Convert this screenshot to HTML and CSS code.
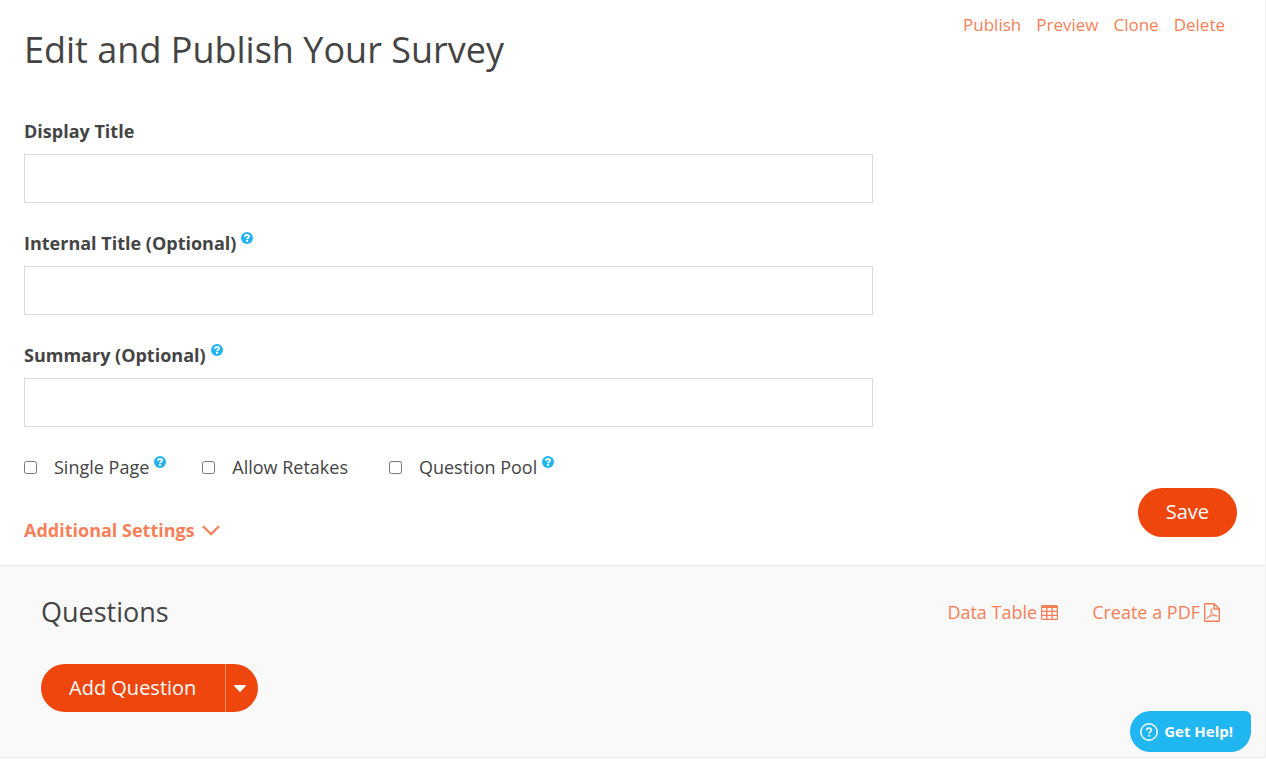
FILE: index.html
```html
<!DOCTYPE html>
<html lang="en">
<head>
<meta charset="utf-8">
<title>Edit and Publish Your Survey</title>
<link rel="stylesheet" href="styles.css">
</head>
<body>
<svg class="sprite" aria-hidden="true">
  <symbol id="help" viewBox="0 0 12 12">
    <circle cx="6" cy="6" r="6" fill="#23b4f2"/>
    <path d="M4 4.700C4 2.300 8 2.400 8 4.500C8 5.800 6.100 5.700 6.100 7.200" fill="none" stroke="#fff" stroke-width="1.900"/>
    <path d="M5.100 8h2v1.800h-2z" fill="#fff"/>
  </symbol>
</svg>
<main class="page">
  <section class="settings">
    <header class="top">
      <h1 class="title">Edit and Publish Your Survey</h1>
      <nav class="actions">
        <a href="#">Publish</a>
        <a href="#">Preview</a>
        <a href="#">Clone</a>
        <a href="#">Delete</a>
      </nav>
    </header>
    <form class="form">
      <div class="fields">
        <div class="field">
          <div class="caption"><label for="display">Display Title</label></div>
          <input class="text" type="text" id="display">
        </div>
        <div class="field">
          <div class="caption"><label for="internal">Internal Title (Optional)</label><svg class="help"><use href="#help"/></svg></div>
          <input class="text" type="text" id="internal">
        </div>
        <div class="field">
          <div class="caption"><label for="summary">Summary (Optional)</label><svg class="help"><use href="#help"/></svg></div>
          <input class="text" type="text" id="summary">
        </div>
        <div class="options">
          <div class="option"><input type="checkbox" id="single"><label for="single">Single Page</label><svg class="help"><use href="#help"/></svg></div>
          <div class="option"><input type="checkbox" id="retakes"><label for="retakes">Allow Retakes</label></div>
          <div class="option"><input type="checkbox" id="pool"><label for="pool">Question Pool</label><svg class="help"><use href="#help"/></svg></div>
        </div>
        <a class="more" href="#">Additional Settings
          <svg class="chevron" viewBox="0 0 18 11"><path d="M1 1.200l8 8 8-8" fill="none" stroke="currentColor" stroke-width="2.300"/></svg>
        </a>
      </div>
      <button class="save" type="submit">Save</button>
    </form>
  </section>
  <section class="questions">
    <header class="bar">
      <h2 class="subtitle">Questions</h2>
      <nav class="tools">
        <a href="#">Data Table
          <svg class="table-icon" viewBox="0 0 17 15"><rect width="17" height="15" rx="1.500" fill="currentColor"/><path d="M1.200 3h4v2.800h-4zM6.500 3h4v2.800h-4zM11.800 3h4v2.800h-4zM1.200 7h4v2.800h-4zM6.500 7h4v2.800h-4zM11.800 7h4v2.800h-4zM1.200 11h4v2.800h-4zM6.500 11h4v2.800h-4zM11.800 11h4v2.800h-4z" fill="#f9f9f9"/></svg>
        </a>
        <a href="#">Create a PDF
          <svg class="pdf-icon" viewBox="0 0 16 19"><g fill="none" stroke="currentColor"><path d="M1.300.7h8.800l5.200 5.200v11.700q0 .7-.7.7H1.300q-.6 0-.6-.7V1.300q0-.6.6-.6zM10 1v5h5" stroke-width="1.400"/><path d="M3.200 15.500C5 15 7.800 9.500 7.800 6.800c0-1.600-1-1.300-.9 0C7.200 9 9.300 12.400 12 13.300c1.500.4 1.500-.8.1-.9-2.600-.1-5.400.4-7.900 1.500-1.200.6-1.700 1.400-1 1.600z" stroke-width=".9"/></g></svg>
        </a>
      </nav>
    </header>
    <div class="split">
      <button class="add" type="button">Add Question</button>
      <button class="toggle" type="button" aria-label="More question types"><svg class="caret" viewBox="0 0 12 7"><path d="M.8 0h10.400q1.200.2.400 1.200L6.700 6.600q-.7.600-1.400 0L.4 1.200Q-.4.200.8 0z" fill="currentColor"/></svg></button>
    </div>
  </section>
</main>
<button class="get-help" type="button">
  <svg class="ring" viewBox="0 0 18 18"><g fill="none" stroke="currentColor"><circle cx="9" cy="9" r="8.200" stroke-width="1.500"/><path d="M6.700 7.200C6.700 4.300 11.400 4.400 11.400 7C11.400 8.600 9.200 8.700 9.200 10.700" stroke-width="1.600"/></g><circle cx="9.200" cy="12.800" r="1" fill="currentColor"/></svg>
  <span class="get-help-text">Get Help!</span>
</button>
</body>
</html>
```
FILE: styles.css
```css
* { box-sizing: border-box; }
body {
  margin: 0;
  background: #fff;
  color: #444;
  font: 18px/27px "Open Sans", sans-serif;
}
a { color: #f77f58; text-decoration: none; }
button { border: 0; font-family: inherit; color: #fff; cursor: pointer; }
svg { flex: none; }
.sprite { position: absolute; width: 0; height: 0; }
.page { border-right: 1px solid #f0f0f0; }
.settings { padding: 12px 28px 21px 24px; }
.top {
  display: flex;
  justify-content: space-between;
  align-items: flex-start;
  margin-bottom: 30px;
}
.title { margin: 0; font-size: 36px; line-height: 76px; font-weight: 400; }
.actions { display: flex; gap: 15px; padding-right: 12px; font-size: 17px; line-height: 26px; }
.form { display: flex; justify-content: space-between; align-items: flex-end; }
.fields { width: 70%; }
.field { margin-bottom: 27px; }
.caption { display: flex; gap: 5px; margin-bottom: 9px; font-weight: 700; }
.help { width: 12px; height: 12px; margin-top: 2px; }
.text {
  display: block;
  width: 100%;
  height: 49px;
  padding: 0 12px;
  border: 1px solid #dbdbdb;
  border-radius: 0;
  background: #fff;
  font: inherit;
}
.options { display: flex; gap: 36px; margin-bottom: 36px; }
.option { display: flex; }
.option label { padding-right: 5px; }
.option input { width: 13px; height: 13px; margin: 7px 17px 0 0; }
.more { display: flex; align-items: center; gap: 7px; font-weight: 700; }
.chevron { width: 18px; height: 11px; }
.save {
  height: 49px;
  padding: 0 28px 2px;
  margin-bottom: 7px;
  border-radius: 25px;
  background: #ef460d;
  font-size: 20px;
}
.questions {
  padding: 28px 45px 45px 41px;
  border: solid #ebebeb;
  border-width: 1px 0;
  background: #f9f9f9;
}
.bar { display: flex; justify-content: space-between; align-items: center; margin-bottom: 34px; }
.subtitle { margin: 0; font-size: 27px; line-height: 36px; font-weight: 400; }
.tools { display: flex; gap: 34px; }
.tools a { display: flex; align-items: center; gap: 4px; }
.table-icon { width: 17px; height: 15px; }
.pdf-icon { width: 16px; height: 19px; }
.split { display: flex; }
.split button { height: 48px; background: #ef460d; font-size: 20px; }
.split .add { padding: 0 29px 2px 28px; border-radius: 24px 0 0 24px; }
.split .toggle {
  width: 33px;
  padding: 0 4px 3px 0;
  border-left: 1px solid #f9906d;
  border-radius: 0 24px 24px 0;
}
.caret { width: 12px; height: 7px; vertical-align: middle; }
.get-help {
  position: fixed;
  right: 15px;
  bottom: 8px;
  display: flex;
  align-items: center;
  gap: 6px;
  height: 41px;
  padding: 0 18px 0 10px;
  border-radius: 21px 6px 21px 21px;
  background: #1fb6f2;
  font-size: 15px;
  font-weight: 700;
}
.ring { width: 18px; height: 18px; }
.get-help-text { padding-bottom: 2px; }
```
